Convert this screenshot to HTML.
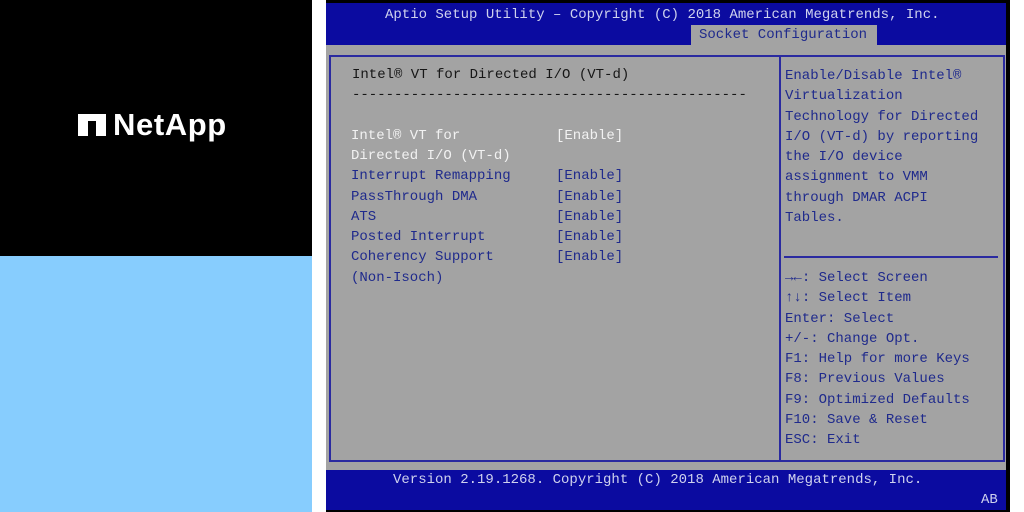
<!DOCTYPE html>
<html><head><style>
*{margin:0;padding:0}
body{width:1024px;height:512px;background:#fff;position:relative;overflow:hidden;font-family:"Liberation Mono",monospace;font-size:14px}
.a{position:absolute;white-space:pre;line-height:18px}
.w{color:#f2f2f2}.b{color:#1f2a8c}.k{color:#161616}.h{color:#cfd2ee}
</style></head><body>
<div style="position:absolute;left:0;top:0;width:312px;height:256px;background:#000"></div>
<div style="position:absolute;left:0;top:256px;width:312px;height:256px;background:#87cdfe"></div>
<div style="position:absolute;left:78px;top:114px;width:28px;height:22px;background:#fff"></div>
<div style="position:absolute;left:88px;top:121px;width:8px;height:15px;background:#000"></div>
<div class="a" style="left:113px;top:105px;font-family:'Liberation Sans',sans-serif;font-weight:bold;font-size:31px;line-height:40px;color:#fff;letter-spacing:0.6px">NetApp</div>

<div style="position:absolute;left:326px;top:0;width:684px;height:512px;background:#000"></div>
<div style="position:absolute;left:326px;top:3px;width:680px;height:42px;background:#0b0ba0"></div>
<div style="position:absolute;left:326px;top:45px;width:680px;height:425px;background:#a3a3a3"></div>
<div style="position:absolute;left:326px;top:470px;width:680px;height:40px;background:#0b0ba0"></div>
<div style="position:absolute;left:691px;top:25px;width:186px;height:20px;background:#a3a3a3"></div>
<div style="position:absolute;left:329px;top:55px;width:672px;height:403px;border:2px solid #2a2aa0"></div>
<div style="position:absolute;left:779px;top:55px;width:2px;height:405px;background:#2a2aa0"></div>
<div style="position:absolute;left:784px;top:256px;width:214px;height:2px;background:#2a2aa0"></div>

<div class="a h" style="left:385px;top:6px">Aptio Setup Utility – Copyright (C) 2018 American Megatrends, Inc.</div>
<div class="a b" style="left:699px;top:26px">Socket Configuration</div>

<div class="a k" style="left:352px;top:66px">Intel® VT for Directed I/O (VT-d)</div>
<div class="a k" style="left:352px;top:86px">-----------------------------------------------</div>
<div class="a w" style="left:351px;top:127px">Intel® VT for</div>
<div class="a w" style="left:556px;top:127px">[Enable]</div>
<div class="a w" style="left:351px;top:147px">Directed I/O (VT-d)</div>
<div class="a b" style="left:351px;top:167px">Interrupt Remapping</div><div class="a b" style="left:556px;top:167px">[Enable]</div>
<div class="a b" style="left:351px;top:188px">PassThrough DMA</div><div class="a b" style="left:556px;top:188px">[Enable]</div>
<div class="a b" style="left:351px;top:208px">ATS</div><div class="a b" style="left:556px;top:208px">[Enable]</div>
<div class="a b" style="left:351px;top:228px">Posted Interrupt</div><div class="a b" style="left:556px;top:228px">[Enable]</div>
<div class="a b" style="left:351px;top:248px">Coherency Support</div><div class="a b" style="left:556px;top:248px">[Enable]</div>
<div class="a b" style="left:351px;top:269px">(Non-Isoch)</div>

<div class="a b" style="left:785px;top:66px;line-height:20.3px">Enable/Disable Intel®
Virtualization
Technology for Directed
I/O (VT-d) by reporting
the I/O device
assignment to VMM
through DMAR ACPI
Tables.</div>
<div class="a b" style="left:785px;top:268px;line-height:20.3px"><b>→←</b>: Select Screen
<b>↑↓</b>: Select Item
Enter: Select
+/-: Change Opt.
F1: Help for more Keys
F8: Previous Values
F9: Optimized Defaults
F10: Save &amp; Reset
ESC: Exit</div>

<div class="a h" style="left:393px;top:471px">Version 2.19.1268. Copyright (C) 2018 American Megatrends, Inc.</div>
<div class="a h" style="left:981px;top:491px">AB</div>
</body></html>
